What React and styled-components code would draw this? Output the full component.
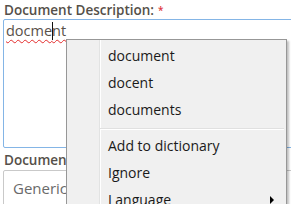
import React from "react";
import styled, { createGlobalStyle } from "styled-components";

const GlobalStyle = createGlobalStyle`
  html, body {
    margin: 0;
    padding: 0;
    background: #ffffff;
    overflow: hidden;
  }
  body {
    font-family: "Open Sans", "Noto Sans", sans-serif;
  }
`;

const Page = styled.div`
  position: relative;
  width: 291px;
  height: 204px;
  overflow: hidden;
  padding: 0 0 0 3px;
  box-sizing: border-box;
`;

const Label = styled.div`
  font-size: 13.5px;
  font-weight: 600;
  color: #555049;
  line-height: 18px;
  padding: 1px 0 0 1px;
  white-space: nowrap;
`;

const Required = styled.span`
  color: #e0393e;
  font-size: 10px;
  vertical-align: top;
  margin-left: 4px;
`;

const TextArea = styled.div`
  width: 320px;
  height: 129px;
  box-sizing: border-box;
  border: 1px solid #84b5e6;
  border-radius: 2px;
  padding: 1px 0 0 2px;
  font-size: 14.5px;
  color: #59514a;
  line-height: 19px;
`;

const Misspelled = styled.span`
  text-decoration: underline wavy #e32b2b;
  text-decoration-thickness: 1px;
  text-underline-offset: 3px;
`;

const Caret = styled.span`
  display: inline-block;
  width: 1px;
  height: 18px;
  background: #111;
  vertical-align: -4px;
  margin: 0 -1px 0 0;
`;

const SecondLabel = styled(Label)`
  padding-top: 3px;
`;

const Input = styled.div`
  width: 320px;
  height: 40px;
  box-sizing: border-box;
  border: 1px solid #c9c9c9;
  border-radius: 2px;
  margin-top: 1px;
  padding: 7px 0 0 9px;
  font-size: 15px;
  color: #6a6a6a;
`;

const Menu = styled.div`
  position: absolute;
  left: 66px;
  top: 39px;
  width: 221px;
  height: 190px;
  box-sizing: border-box;
  background: #f0f0f0;
  border: 1px solid #979797;
  box-shadow: 2px 2px 2px rgba(0, 0, 0, 0.25);
  display: grid;
  grid-template-columns: 33px 1fr;
`;

const IconColumn = styled.div`
  border-right: 1px solid #e2e3e3;
  box-shadow: 1px 0 0 #ffffff;
`;

const Items = styled.div`
  display: flex;
  flex-direction: column;
  padding-top: 2px;
`;

const Item = styled.div`
  display: flex;
  align-items: center;
  justify-content: space-between;
  flex: none;
  height: 27px;
  padding: 0 12px 0 8px;
  font-size: 14px;
  font-weight: ${(p) => (p.$suggestion ? 500 : 400)};
  color: #1a1a1a;
  white-space: nowrap;
`;

const Separator = styled.div`
  flex: none;
  height: 1px;
  margin: 5px 2px 2px 0;
  background: #e0e0e0;
  border-bottom: 1px solid #ffffff;
`;

const Arrow = styled.span`
  width: 0;
  height: 0;
  border-top: 4px solid transparent;
  border-bottom: 4px solid transparent;
  border-left: 4px solid #000;
`;

export default function App() {
  return (
    <>
      <GlobalStyle />
      <Page>
        <Label>
          Document Description:<Required>*</Required>
        </Label>
        <TextArea>
          <Misspelled>
            docme<Caret />nt
          </Misspelled>
        </TextArea>
        <SecondLabel>Document Type:</SecondLabel>
        <Input>Generic</Input>
        <Menu>
          <IconColumn />
          <Items>
            <Item $suggestion>document</Item>
            <Item $suggestion>docent</Item>
            <Item $suggestion>documents</Item>
            <Separator />
            <Item>Add to dictionary</Item>
            <Item>Ignore</Item>
            <Item>
              Language
              <Arrow />
            </Item>
          </Items>
        </Menu>
      </Page>
    </>
  );
}
